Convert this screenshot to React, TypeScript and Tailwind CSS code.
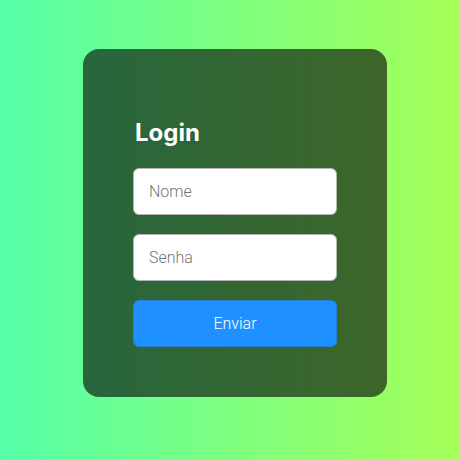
export default function App() {
  return (
    <div className="w-[460px] h-[460px] bg-[linear-gradient(to_right,#55ffa8,#a6ff58)] pl-[83px] pt-[49px]" style={{ fontFamily: "Roboto, 'Liberation Sans', sans-serif" }}>
      <form
        className="w-[304px] h-[348px] rounded-[16px] bg-[rgba(0,0,0,0.6)] px-[50px] pt-[68px] flex flex-col"
        onSubmit={(e) => e.preventDefault()}
      >
        <h1 className="text-white text-[24px] leading-[32px] font-bold pl-[2px]" style={{ fontFamily: "Inter, 'Noto Sans', sans-serif" }}>
          Login
        </h1>
        <input
          type="text"
          placeholder="Nome"
          className="mt-[19px] h-[47px] w-full rounded-[6px] border border-[#b5b5b5] bg-white px-[15px] text-[16px] font-light text-[#333] placeholder:text-[#757575] outline-none"
        />
        <input
          type="password"
          placeholder="Senha"
          className="mt-[19px] h-[47px] w-full rounded-[6px] border border-[#b5b5b5] bg-white px-[15px] text-[16px] font-light text-[#333] placeholder:text-[#757575] outline-none"
        />
        <button
          type="submit"
          className="mt-[19px] h-[47px] w-full rounded-[6px] border border-[#2a80d0] bg-[#1e90ff] text-white text-[16px] font-light"
        >
          Enviar
        </button>
      </form>
    </div>
  );
}
